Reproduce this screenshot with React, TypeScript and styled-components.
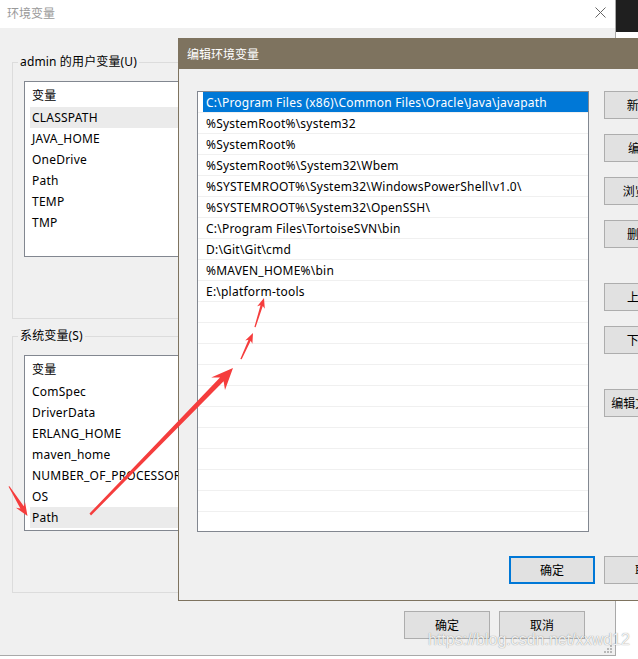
import React from "react"
import styled, { createGlobalStyle } from "styled-components"

const GlobalStyle = createGlobalStyle`
    html, body {
        margin: 0;
        padding: 0;
        background: #fff;
    }
    body {
        font-family: "Noto Sans", "Noto Sans CJK SC", sans-serif;
        font-size: 12px;
        color: #000;
    }
`

const Desktop = styled.div`
    position: relative;
    width: 638px;
    height: 659px;
    overflow: hidden;
    background: #fff;
`

const BackWindow = styled.div`
    position: absolute;
    left: 616px;
    top: 0;
    width: 22px;
    height: 32px;
    background: #1f1f1f;
`

const MainWindow = styled.div`
    width: 616px;
    height: 656px;
    box-sizing: border-box;
    border-right: 1px solid #a9a9a9;
    border-bottom: 1px solid #a9a9a9;
    background: #f0f0f0;
    display: flex;
    flex-direction: column;
`

const TitleBar = styled.div`
    flex: none;
    height: 28px;
    box-sizing: border-box;
    padding: 0 0 3px 7px;
    background: #fff;
    display: flex;
    align-items: center;
    justify-content: space-between;
    color: #999;
`

const CloseBox = styled.div`
    width: 30px;
    display: flex;
    align-items: center;
    justify-content: center;
`

const WindowBody = styled.div`
    flex: 1;
    padding: 26px 12px 0;
    display: flex;
    flex-direction: column;
`

const GroupBox = styled.fieldset`
    margin: 0;
    padding: 11px 11px 0;
    height: 265px;
    box-sizing: border-box;
    border: 1px solid #dcdcdc;
    min-width: 0;

    & + & {
        margin-top: 9px;
    }
`

const Legend = styled.legend`
    padding: 0 2px;
    margin-left: -6px;
    line-height: 16px;
    letter-spacing: 0.15px;
`

const VarList = styled.div`
    height: 176px;
    box-sizing: border-box;
    border: 1px solid #828790;
    background: #fff;
    overflow: hidden;
    letter-spacing: 0.22px;
`

const ListHeader = styled.div`
    height: 25px;
    display: flex;
    align-items: center;
    padding-left: 7px;
`

const VarRow = styled.div<{ $selected?: boolean }>`
    height: 21px;
    margin-left: 5px;
    padding-left: 2px;
    display: flex;
    align-items: center;
    white-space: nowrap;
    background: ${p => (p.$selected ? "#ebebeb" : "transparent")};
`

const ButtonRow = styled.div`
    margin-top: 18px;
    padding-right: 18px;
    display: flex;
    justify-content: flex-end;
    gap: 9px;
`

const Button = styled.button<{ $default?: boolean; $spaced?: boolean }>`
    flex: none;
    width: 86px;
    height: 28px;
    box-sizing: border-box;
    padding: 0;
    margin-top: ${p => (p.$spaced ? "20px" : "0")};
    background: #e1e1e1;
    border: ${p => (p.$default ? "2px solid #0078d7" : "1px solid #adadad")};
    font: inherit;
    color: #000;
    white-space: nowrap;
    overflow: hidden;
`

const Dialog = styled.div`
    position: absolute;
    left: 178px;
    top: 38px;
    width: 531px;
    height: 563px;
    box-sizing: border-box;
    border: 1px solid #7e735f;
    background: #f0f0f0;
    display: flex;
    flex-direction: column;
`

const DialogTitle = styled.div`
    flex: none;
    height: 30px;
    padding-left: 8px;
    background: #7e735f;
    color: #fff;
    display: flex;
    align-items: center;
`

const DialogBody = styled.div`
    flex: 1;
    padding: 22px 18px 0;
    display: flex;
    flex-direction: column;
`

const DialogMain = styled.div`
    display: flex;
    align-items: flex-start;
    gap: 15px;
`

const PathList = styled.div`
    width: 392px;
    height: 441px;
    box-sizing: border-box;
    border: 1px solid #828790;
    background: #fff;
    overflow: hidden;
    letter-spacing: 0.22px;
`

const PathRow = styled.div`
    height: 21px;
    box-sizing: border-box;
    border-bottom: 1px solid #f0f0f0;
    display: flex;
`

const PathCell = styled.div<{ $selected?: boolean }>`
    flex: 1;
    margin-left: 5px;
    padding-left: 3px;
    display: flex;
    align-items: center;
    white-space: nowrap;
    background: ${p => (p.$selected ? "#0078d7" : "transparent")};
    color: ${p => (p.$selected ? "#fff" : "#000")};
`

const SideButtons = styled.div`
    display: flex;
    flex-direction: column;
    gap: 15px;
`

const DialogFooter = styled.div`
    margin-top: 24px;
    display: flex;
    justify-content: flex-end;
    gap: 9px;
`

const Grip = styled.svg`
    position: absolute;
    left: 603px;
    top: 644px;
`

const Watermark = styled.div`
    position: absolute;
    left: 428px;
    top: 631px;
    font-family: "Liberation Sans", Arial, sans-serif;
    font-size: 16px;
    line-height: 18px;
    color: rgba(255, 255, 255, 0.9);
    text-shadow: 0 0 1px rgba(0, 0, 0, 0.5);
    white-space: nowrap;
`

const Annotations = styled.svg`
    position: absolute;
    left: 0;
    top: 0;
    pointer-events: none;
`

const userVars = ["CLASSPATH", "JAVA_HOME", "OneDrive", "Path", "TEMP", "TMP"]
const systemVars = ["ComSpec", "DriverData", "ERLANG_HOME", "maven_home", "NUMBER_OF_PROCESSORS", "OS", "Path"]

const paths = [
    "C:\\Program Files (x86)\\Common Files\\Oracle\\Java\\javapath",
    "%SystemRoot%\\system32",
    "%SystemRoot%",
    "%SystemRoot%\\System32\\Wbem",
    "%SYSTEMROOT%\\System32\\WindowsPowerShell\\v1.0\\",
    "%SYSTEMROOT%\\System32\\OpenSSH\\",
    "C:\\Program Files\\TortoiseSVN\\bin",
    "D:\\Git\\Git\\cmd",
    "%MAVEN_HOME%\\bin",
    "E:\\platform-tools",
]

const sideButtons = [
    { label: "新建(N)" },
    { label: "编辑(E)" },
    { label: "浏览(B)..." },
    { label: "删除(D)" },
    { label: "上移(U)", spaced: true },
    { label: "下移(O)" },
    { label: "编辑文本(T)...", spaced: true },
]

function VariableGroup(props: { title: string; vars: string[]; selected: string }) {
    return (
        <GroupBox>
            <Legend>{props.title}</Legend>
            <VarList>
                <ListHeader>变量</ListHeader>
                {props.vars.map(v => (
                    <VarRow key={v} $selected={v === props.selected}>
                        {v}
                    </VarRow>
                ))}
            </VarList>
        </GroupBox>
    )
}

function EditDialog() {
    const rows = Array.from({ length: 20 }, (_, i) => paths[i] || "")
    return (
        <Dialog>
            <DialogTitle>编辑环境变量</DialogTitle>
            <DialogBody>
                <DialogMain>
                    <PathList>
                        {rows.map((p, i) => (
                            <PathRow key={i}>
                                <PathCell $selected={i === 0}>{p}</PathCell>
                            </PathRow>
                        ))}
                    </PathList>
                    <SideButtons>
                        {sideButtons.map(b => (
                            <Button key={b.label} $spaced={b.spaced}>
                                {b.label}
                            </Button>
                        ))}
                    </SideButtons>
                </DialogMain>
                <DialogFooter>
                    <Button $default>确定</Button>
                    <Button>取消</Button>
                </DialogFooter>
            </DialogBody>
        </Dialog>
    )
}

function Arrows() {
    return (
        <Annotations width="638" height="659" viewBox="0 0 638 659">
            <g fill="#f53d3d">
                <polygon points="89.5,513.5 91,515.5 223.6,381.2 225,390 233,368 211.2,377.4 220,377.6" />
                <polygon points="240.3,359 241.7,359.3 250.7,340.8 252.4,343.8 253,333 245.2,340.4 248.5,339.8" />
                <polygon points="254.4,327 255.6,327.2 262.8,306 264.8,308.7 264,298 257.2,306.3 260.5,305.2" />
                <polygon points="8.5,486.5 9.5,486.3 23.8,506.3 25,502 27.5,516 16,507.8 20.4,508.5" />
            </g>
        </Annotations>
    )
}

export default function App() {
    return (
        <Desktop>
            <GlobalStyle />
            <BackWindow />
            <MainWindow>
                <TitleBar>
                    <span>环境变量</span>
                    <CloseBox>
                        <svg width="11" height="11" viewBox="0 0 11 11">
                            <path d="M0.5 0.5 L10.5 10.5 M10.5 0.5 L0.5 10.5" stroke="#666" strokeWidth="1" />
                        </svg>
                    </CloseBox>
                </TitleBar>
                <WindowBody>
                    <VariableGroup title="admin 的用户变量(U)" vars={userVars} selected="CLASSPATH" />
                    <VariableGroup title="系统变量(S)" vars={systemVars} selected="Path" />
                    <ButtonRow>
                        <Button>确定</Button>
                        <Button>取消</Button>
                    </ButtonRow>
                </WindowBody>
            </MainWindow>
            <Grip width="10" height="10" viewBox="0 0 10 10">
                <g fill="#b8b8b8">
                    <rect x="7" y="1" width="2" height="2" />
                    <rect x="4" y="4" width="2" height="2" />
                    <rect x="7" y="4" width="2" height="2" />
                    <rect x="1" y="7" width="2" height="2" />
                    <rect x="4" y="7" width="2" height="2" />
                    <rect x="7" y="7" width="2" height="2" />
                </g>
            </Grip>
            <EditDialog />
            <Arrows />
            <Watermark>https://blog.csdn.net/xxwd12</Watermark>
        </Desktop>
    )
}
